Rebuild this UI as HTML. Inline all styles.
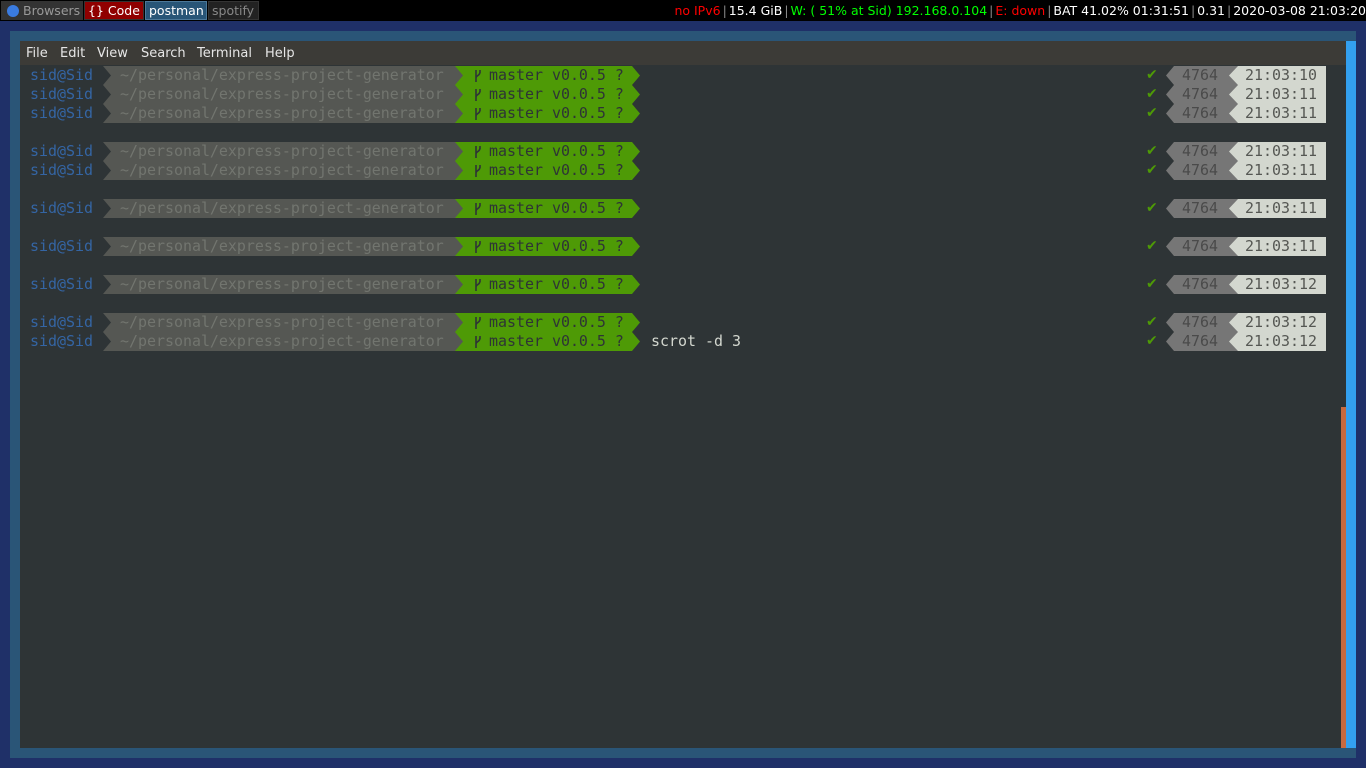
<!DOCTYPE html>
<html><head><meta charset="utf-8"><style>
*{margin:0;padding:0;box-sizing:border-box}
body{width:1366px;height:768px;overflow:hidden;background:#1f3068;position:relative;font-family:"DejaVu Sans","Liberation Sans",sans-serif}
.top{position:absolute;left:0;top:0;width:1366px;height:21px;background:#000;font-size:12px;line-height:21px}
.ws{position:absolute;top:1px;height:19px;line-height:18px;padding:0 3px;border:1px solid #333;font-size:12.5px;white-space:nowrap;overflow:hidden}
.stat{position:absolute;right:0;top:0;white-space:nowrap;font-size:12.5px;color:#fff}
.stat span.sep{color:#888;margin:0 2px}
.win{position:absolute;left:10px;top:31px;width:1346px;height:727px;background:#2a5577}
.term{position:absolute;left:20px;top:41px;width:1326px;height:707px;background:#2e3436}
.menu{position:absolute;left:0;top:0;width:1326px;height:24px;background:#3c3b37;color:#e6e6e6;font-size:13px;line-height:24px}
.menu span{position:absolute;top:1px}
.row{position:absolute;left:0;width:1326px;height:19px;font-family:"DejaVu Sans Mono","Liberation Mono",monospace;font-size:14.95px;line-height:19px}
.row div{position:absolute;top:0;height:19px;white-space:pre}
.u{left:10px;color:#3465a4}
.g{left:83px;width:360px;background:#555753;color:#72756f;clip-path:polygon(0 0,100% 0,100% 100%,0 100%,8px 50%);padding-left:17px}
.gr{left:435px;width:185px;background:#4e9a06;color:#2e3436;clip-path:polygon(0 0,calc(100% - 8px) 0,100% 50%,calc(100% - 8px) 100%,0 100%,8px 50%);padding-left:34px}
.br{position:absolute;left:19px;top:3px}
.ck{left:1126px;color:#4e9a06;font-family:"DejaVu Sans",sans-serif;font-size:14px}
.pid{left:1146px;width:72px;background:#767676;color:#4a4a4a;clip-path:polygon(8px 0,100% 0,100% 100%,8px 100%,0 50%);padding-left:16px}
.tm{left:1209px;width:97px;background:#d3d7cf;color:#555753;clip-path:polygon(9px 0,100% 0,100% 100%,9px 100%,0 50%);padding-left:16px}
.cmd{left:631px;color:#d3d7cf}
</style></head><body>
<div class="top">
 <div class="ws" style="left:1px;width:82px;background:#333;color:#999;padding-left:21px"><span style="position:absolute;left:5px;top:3px;width:12px;height:12px;border-radius:50%;background:#3a7be0"></span>Browsers</div>
 <div class="ws" style="left:84px;width:60px;background:#900000;color:#fff">{} Code</div>
 <div class="ws" style="left:145px;width:62px;background:#285577;color:#fff;border-color:#4c7899">postman</div>
 <div class="ws" style="left:208px;width:51px;background:#222;color:#888">spotify</div>
 <div class="stat"><span style="color:#f00">no IPv6</span><span class="sep">|</span>15.4 GiB<span class="sep">|</span><span style="color:#0f0">W: ( 51% at Sid) 192.168.0.104</span><span class="sep">|</span><span style="color:#f00">E: down</span><span class="sep">|</span>BAT 41.02% 01:31:51<span class="sep">|</span>0.31<span class="sep">|</span>2020-03-08 21:03:20</div>
</div>
<div class="win"></div>
<div style="position:absolute;left:1346px;top:41px;width:10px;height:707px;background:#33a0f0"></div>
<div class="term">
 <div class="menu"><span style="left:6px">File</span><span style="left:40px">Edit</span><span style="left:77px">View</span><span style="left:121px">Search</span><span style="left:177px">Terminal</span><span style="left:245px">Help</span></div>
 <div style="position:absolute;left:1321px;top:366px;width:5px;height:341px;background:#c8693f"></div>
</div>
<div style="position:absolute;left:20px;top:41px">
<div class="row" style="top:25px"><div class="u">sid@Sid</div><div class="g">~/personal/express-project-generator</div><div class="gr"><svg class="br" width="8" height="14" viewBox="0 0 8 14"><path d="M2 1V13M2 9C2 6 6 7 6 3M6 1V4" stroke="#2e3436" stroke-width="1.6" fill="none"/></svg>master v0.0.5 ?</div><div class="ck">✔</div><div class="pid">4764</div><div class="tm">21:03:10</div></div>
<div class="row" style="top:44px"><div class="u">sid@Sid</div><div class="g">~/personal/express-project-generator</div><div class="gr"><svg class="br" width="8" height="14" viewBox="0 0 8 14"><path d="M2 1V13M2 9C2 6 6 7 6 3M6 1V4" stroke="#2e3436" stroke-width="1.6" fill="none"/></svg>master v0.0.5 ?</div><div class="ck">✔</div><div class="pid">4764</div><div class="tm">21:03:11</div></div>
<div class="row" style="top:63px"><div class="u">sid@Sid</div><div class="g">~/personal/express-project-generator</div><div class="gr"><svg class="br" width="8" height="14" viewBox="0 0 8 14"><path d="M2 1V13M2 9C2 6 6 7 6 3M6 1V4" stroke="#2e3436" stroke-width="1.6" fill="none"/></svg>master v0.0.5 ?</div><div class="ck">✔</div><div class="pid">4764</div><div class="tm">21:03:11</div></div>
<div class="row" style="top:101px"><div class="u">sid@Sid</div><div class="g">~/personal/express-project-generator</div><div class="gr"><svg class="br" width="8" height="14" viewBox="0 0 8 14"><path d="M2 1V13M2 9C2 6 6 7 6 3M6 1V4" stroke="#2e3436" stroke-width="1.6" fill="none"/></svg>master v0.0.5 ?</div><div class="ck">✔</div><div class="pid">4764</div><div class="tm">21:03:11</div></div>
<div class="row" style="top:120px"><div class="u">sid@Sid</div><div class="g">~/personal/express-project-generator</div><div class="gr"><svg class="br" width="8" height="14" viewBox="0 0 8 14"><path d="M2 1V13M2 9C2 6 6 7 6 3M6 1V4" stroke="#2e3436" stroke-width="1.6" fill="none"/></svg>master v0.0.5 ?</div><div class="ck">✔</div><div class="pid">4764</div><div class="tm">21:03:11</div></div>
<div class="row" style="top:158px"><div class="u">sid@Sid</div><div class="g">~/personal/express-project-generator</div><div class="gr"><svg class="br" width="8" height="14" viewBox="0 0 8 14"><path d="M2 1V13M2 9C2 6 6 7 6 3M6 1V4" stroke="#2e3436" stroke-width="1.6" fill="none"/></svg>master v0.0.5 ?</div><div class="ck">✔</div><div class="pid">4764</div><div class="tm">21:03:11</div></div>
<div class="row" style="top:196px"><div class="u">sid@Sid</div><div class="g">~/personal/express-project-generator</div><div class="gr"><svg class="br" width="8" height="14" viewBox="0 0 8 14"><path d="M2 1V13M2 9C2 6 6 7 6 3M6 1V4" stroke="#2e3436" stroke-width="1.6" fill="none"/></svg>master v0.0.5 ?</div><div class="ck">✔</div><div class="pid">4764</div><div class="tm">21:03:11</div></div>
<div class="row" style="top:234px"><div class="u">sid@Sid</div><div class="g">~/personal/express-project-generator</div><div class="gr"><svg class="br" width="8" height="14" viewBox="0 0 8 14"><path d="M2 1V13M2 9C2 6 6 7 6 3M6 1V4" stroke="#2e3436" stroke-width="1.6" fill="none"/></svg>master v0.0.5 ?</div><div class="ck">✔</div><div class="pid">4764</div><div class="tm">21:03:12</div></div>
<div class="row" style="top:272px"><div class="u">sid@Sid</div><div class="g">~/personal/express-project-generator</div><div class="gr"><svg class="br" width="8" height="14" viewBox="0 0 8 14"><path d="M2 1V13M2 9C2 6 6 7 6 3M6 1V4" stroke="#2e3436" stroke-width="1.6" fill="none"/></svg>master v0.0.5 ?</div><div class="ck">✔</div><div class="pid">4764</div><div class="tm">21:03:12</div></div>
<div class="row" style="top:291px"><div class="u">sid@Sid</div><div class="g">~/personal/express-project-generator</div><div class="gr"><svg class="br" width="8" height="14" viewBox="0 0 8 14"><path d="M2 1V13M2 9C2 6 6 7 6 3M6 1V4" stroke="#2e3436" stroke-width="1.6" fill="none"/></svg>master v0.0.5 ?</div><div class="cmd">scrot -d 3</div><div class="ck">✔</div><div class="pid">4764</div><div class="tm">21:03:12</div></div>
</div>
</body></html>
